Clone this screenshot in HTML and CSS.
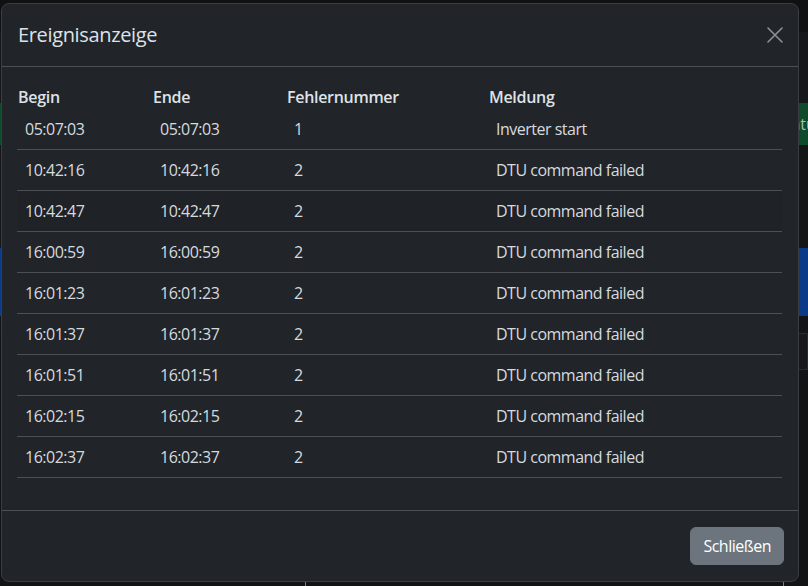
FILE: index.html
```html
<!DOCTYPE html>
<html lang="de">
<head>
<meta charset="utf-8">
<title>Ereignisanzeige</title>
<link rel="stylesheet" href="styles.css">
</head>
<body>
<div class="page">
  <div class="pg-nav"></div>
  <div class="pg-band"></div>
  <div class="pg-green"><span>Status</span></div>
  <div class="pg-dark"></div>
  <div class="pg-blue"></div>
  <div class="pg-gap"></div>
  <div class="pg-card"></div>
  <div class="pg-rest"></div>
  <div class="pg-bottom"><i class="cy cy1"></i><i class="cy cy2"></i></div>
</div>

<div class="modal">
  <div class="modal-header">
    <h5 class="modal-title">Ereignisanzeige</h5>
    <svg class="btn-close" viewBox="0 0 16 16" width="16" height="16" aria-label="Close">
      <path d="M1 1 L15 15 M15 1 L1 15" stroke="#8d9094" stroke-width="1.6" stroke-linecap="round" fill="none"/>
    </svg>
  </div>
  <div class="modal-body">
    <table class="events">
      <colgroup>
        <col class="c1"><col class="c2"><col class="c3"><col class="c4">
      </colgroup>
      <thead>
        <tr><th>Begin</th><th>Ende</th><th>Fehlernummer</th><th>Meldung</th></tr>
      </thead>
      <tbody>
        <tr><td>05:07:03</td><td>05:07:03</td><td>1</td><td>Inverter start</td></tr>
        <tr><td>10:42:16</td><td>10:42:16</td><td>2</td><td>DTU command failed</td></tr>
        <tr class="hover"><td>10:42:47</td><td>10:42:47</td><td>2</td><td>DTU command failed</td></tr>
        <tr><td>16:00:59</td><td>16:00:59</td><td>2</td><td>DTU command failed</td></tr>
        <tr><td>16:01:23</td><td>16:01:23</td><td>2</td><td>DTU command failed</td></tr>
        <tr><td>16:01:37</td><td>16:01:37</td><td>2</td><td>DTU command failed</td></tr>
        <tr><td>16:01:51</td><td>16:01:51</td><td>2</td><td>DTU command failed</td></tr>
        <tr><td>16:02:15</td><td>16:02:15</td><td>2</td><td>DTU command failed</td></tr>
        <tr><td>16:02:37</td><td>16:02:37</td><td>2</td><td>DTU command failed</td></tr>
      </tbody>
    </table>
  </div>
  <div class="modal-footer">
    <button class="btn-secondary" type="button">Schließen</button>
  </div>
</div>
</body>
</html>
```

FILE: styles.css
```css
* { box-sizing: border-box; }

html, body {
  margin: 0;
  padding: 0;
  width: 808px;
  height: 586px;
  overflow: hidden;
  background: #111315;
  font-family: "Open Sans", "Noto Sans", "Liberation Sans", sans-serif;
}

/* darkened page behind the backdrop */
.page {
  display: flex;
  flex-direction: column;
  height: 586px;
}
.pg-nav { height: 32px; background: #0f1113; }
.pg-band { height: 71px; background: #15171a; }
.pg-green {
  height: 42px;
  background: #104a2d;
  color: #a8bfb0;
  font-size: 16px;
  line-height: 42px;
  padding-left: 777px;
  white-space: nowrap;
  overflow: hidden;
}
.pg-dark { height: 103px; background: #131517; }
.pg-blue { height: 68px; background: #0b3a88; }
.pg-gap { height: 17px; background: #121416; }
.pg-card {
  height: 37px;
  margin-left: 760px;
  background: #16181b;
  border: 1px solid #282b2e;
  border-radius: 6px 0 0 6px;
}
.pg-rest { flex: 1; background: #111315; }
.pg-bottom {
  height: 10px;
  background: #111315;
  display: flex;
}
.cy { display: block; width: 1px; height: 10px; background: #1aa3b3; }
.cy1 { margin-left: 305px; }
.cy2 { margin-left: 477px; }

/* modal */
.modal {
  position: fixed;
  left: 1px;
  top: 3px;
  width: 798px;
  background: #212529;
  color: #dee2e6;
  border: 1px solid #3a3d41;
  border-radius: 8px;
  font-size: 16px;
  line-height: 24px;
}

.modal-header {
  display: flex;
  align-items: center;
  justify-content: space-between;
  padding: 16px;
  border-bottom: 1px solid #495057;
}
.modal-title {
  margin: 0;
  font-size: 20px;
  font-weight: 500;
  line-height: 30px;
  letter-spacing: -0.35px;
}
.btn-close {
  display: block;
  margin-right: -1px;
}

.modal-body {
  padding: 16px 16px 16px 15px;
}

.events {
  width: 100%;
  border-collapse: collapse;
  margin-bottom: 16px;
  table-layout: fixed;
}
.c1 { width: 135px; }
.c2 { width: 134px; }
.c3 { width: 202px; }

.events th {
  text-align: left;
  font-weight: 600;
  letter-spacing: -0.3px;
  padding: 2px 0 0 1px;
  line-height: 24px;
}
.events td {
  padding: 8px;
  line-height: 24px;
  letter-spacing: -0.5px;
  color: #d6dadf;
  border-bottom: 1px solid #4b5056;
}
.events tr.hover td { background: #1f2226; }

.modal-footer {
  display: flex;
  justify-content: flex-end;
  padding: 12px 10px 12px 12px;
  border-top: 1px solid #495057;
}
.btn-secondary {
  margin: 4px;
  padding: 6px 12px;
  font-family: inherit;
  font-size: 16px;
  line-height: 24px;
  letter-spacing: -0.5px;
  color: #fff;
  background: #6c757d;
  border: 1px solid #6c757d;
  border-radius: 6px;
}
```
